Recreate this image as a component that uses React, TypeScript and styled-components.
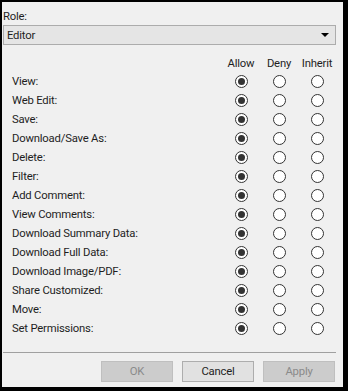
import React, { useState } from "react";
import styled, { createGlobalStyle } from "styled-components";

const GlobalStyle = createGlobalStyle`
  html, body {
    margin: 0;
    padding: 0;
    background: #000;
  }
  body {
    font-family: Roboto, "Noto Sans", sans-serif;
    font-size: 11.3px;
    letter-spacing: -0.2px;
    color: #1e1e1e;
  }
`;

type Perm = "allow" | "deny" | "inherit";

const capabilities = [
  "View:",
  "Web Edit:",
  "Save:",
  "Download/Save As:",
  "Delete:",
  "Filter:",
  "Add Comment:",
  "View Comments:",
  "Download Summary Data:",
  "Download Full Data:",
  "Download Image/PDF:",
  "Share Customized:",
  "Move:",
  "Set Permissions:",
];

const columns: { key: Perm; label: string }[] = [
  { key: "allow", label: "Allow" },
  { key: "deny", label: "Deny" },
  { key: "inherit", label: "Inherit" },
];

const App = () => {
  const [perms, setPerms] = useState<Record<string, Perm>>(() =>
    Object.fromEntries(capabilities.map((c) => [c, "allow" as Perm]))
  );

  return (
    <>
      <GlobalStyle />
      <Frame>
        <Dialog>
          <RoleLabel>Role:</RoleLabel>
          <Select>
            <span>Editor</span>
            <Arrow />
          </Select>
          <Grid>
            <span />
            {columns.map((c) => (
              <ColHead key={c.key}>{c.label}</ColHead>
            ))}
            {capabilities.map((cap) => (
              <React.Fragment key={cap}>
                <RowLabel>{cap}</RowLabel>
                {columns.map((c) => (
                  <Cell key={c.key}>
                    <Radio
                      $checked={perms[cap] === c.key}
                      onClick={() => setPerms({ ...perms, [cap]: c.key })}
                    />
                  </Cell>
                ))}
              </React.Fragment>
            ))}
          </Grid>
          <Footer>
            <Button disabled>OK</Button>
            <Button>Cancel</Button>
            <Button disabled>Apply</Button>
          </Footer>
        </Dialog>
      </Frame>
    </>
  );
};

const Frame = styled.div`
  width: 348px;
  height: 391px;
  padding: 2px 5px 4px 2px;
  box-sizing: border-box;
  background: #000;
`;

const Dialog = styled.div`
  height: 100%;
  background: #f0f0f0;
  display: flex;
  flex-direction: column;
  padding: 7px 7px 0 1px;
  box-sizing: border-box;
`;

const RoleLabel = styled.div`
  line-height: 16px;
  height: 16px;
`;

const Select = styled.div`
  height: 20px;
  box-sizing: border-box;
  border: 1px solid #acacac;
  background: #e5e5e5;
  display: flex;
  align-items: center;
  justify-content: space-between;
  padding: 0 6px 0 3px;
`;

const Arrow = styled.span`
  width: 0;
  height: 0;
  border-left: 4px solid transparent;
  border-right: 4px solid transparent;
  border-top: 4px solid #000;
`;

const Grid = styled.div`
  display: grid;
  grid-template-columns: 1fr 38px 38px 38px;
  grid-auto-rows: 19px;
  grid-template-rows: 17px;
  margin-top: 10px;
  padding-left: 9px;
`;

const ColHead = styled.div`
  text-align: center;
  line-height: 17px;
  white-space: nowrap;
`;

const RowLabel = styled.div`
  display: flex;
  align-items: center;
  white-space: nowrap;
`;

const Cell = styled.div`
  display: flex;
  align-items: center;
  justify-content: center;
`;

const Radio = styled.span<{ $checked: boolean }>`
  width: 13px;
  height: 13px;
  box-sizing: border-box;
  border-radius: 50%;
  border: 1px solid #333;
  background: #fff;
  position: relative;
  &::after {
    content: "";
    display: ${(p) => (p.$checked ? "block" : "none")};
    position: absolute;
    left: 2px;
    top: 2px;
    width: 7px;
    height: 7px;
    border-radius: 50%;
    background: #333;
  }
`;

const Footer = styled.div`
  margin-top: auto;
  border-top: 1px solid #a0a0a0;
  display: flex;
  justify-content: flex-end;
  gap: 9px;
  padding: 8px 1px 5px 0;
`;

const Button = styled.button`
  width: 72px;
  height: 21px;
  font-family: inherit;
  font-size: 11.3px;
  letter-spacing: -0.2px;
  padding: 0;
  border: 1px solid #adadad;
  background: #e1e1e1;
  color: #1e1e1e;
  &:disabled {
    background: #cccccc;
    border-color: #bfbfbf;
    color: #8a8a8a;
  }
`;

export default App;
